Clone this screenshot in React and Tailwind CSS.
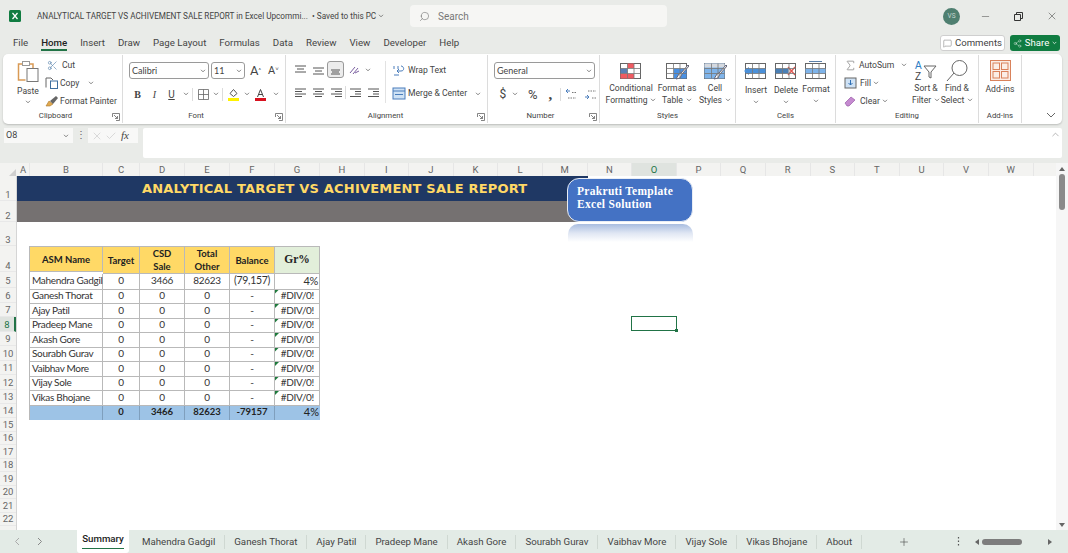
import { Search, Minus, X, Check, Scissors, MessageSquare, Share2, Plus, Sigma, ChevronUp } from 'lucide-react'

const ui = 'font-["Roboto","Liberation_Sans",sans-serif]'
const cellFont = 'font-["Lato","Liberation_Sans",sans-serif]'

const Chev = ({ className = '' }) => (
  <svg width="6" height="4" viewBox="0 0 7 5" className={`shrink-0 ${className}`}>
    <path d="M1 1l2.500 2.500L6 1" fill="none" stroke="#666" strokeWidth="1" />
  </svg>
)

const Launcher = () => (
  <svg width="8" height="8" viewBox="0 0 8 8" className="absolute right-[2px] top-[4px]">
    <path d="M.5 4V.5h7v7H4" fill="none" stroke="#666" strokeWidth=".8" />
    <path d="M2 2l3.500 3.500M5.500 3v2.500H3" fill="none" stroke="#666" strokeWidth=".8" />
  </svg>
)

const Group = ({ width, label, launcher, children }) => (
  <div className={`flex flex-col shrink-0 h-full ${width}`}>
    <div className="h-[54px] border-r border-[#dcdcdc]">{children}</div>
    <div className="relative h-[14px] border-r border-[#dcdcdc] text-center text-[7.800px] leading-[14px] text-[#444]">
      {label}
      {launcher && <Launcher />}
    </div>
  </div>
)

const Lines = ({ rows }) => (
  <svg width="13" height="12" viewBox="0 0 13 12">
    {rows.map(([x1, x2, y], i) => (
      <path key={i} d={`M${x1} ${y}H${x2}`} stroke="#555" strokeWidth="1" />
    ))}
  </svg>
)

const SheetIcon = ({ children }) => (
  <svg width="24" height="20" viewBox="0 0 24 20">
    <rect x="1.500" y="2.500" width="20" height="15" fill="#fff" stroke="#666" />
    {children}
    <path d="M8.500 2.500v15M15 2.500v15M1.500 7.500h20M1.500 12.500h20" stroke="#777" strokeWidth=".8" fill="none" />
  </svg>
)

const Brush = () => (
  <path d="M23 4l-7 8-2 1-3 5 4-1 2-4 7-8z" fill="#fff" stroke="#667" strokeWidth="1" />
)

const BigLabel = ({ a, b, chev = true, width }) => (
  <div className={`flex flex-col items-center text-[8.600px] leading-[11.500px] text-[#444] ${width}`}>
    <span className="whitespace-nowrap">{a}</span>
    <span className="flex items-center gap-[3px] whitespace-nowrap">{b}{chev && <Chev />}</span>
  </div>
)

const SmallRow = ({ icon, label }) => (
  <div className="flex items-center h-[18px] text-[8.600px] text-[#444] whitespace-nowrap">
    <div className="w-[14px] flex justify-center shrink-0">{icon}</div>
    <span className="ml-[1px]">{label}</span>
  </div>
)

const Clipboard = () => (
  <Group width="w-[120px]" label={<span className="pr-[14px]">Clipboard</span>} launcher>
    <div className="flex pl-[11px]">
      <div className="w-[28px] flex flex-col items-center pt-[5px]">
        <svg width="24" height="23" viewBox="0 0 24 23">
          <path d="M7 4H2.500v16h7" fill="none" stroke="#d99a55" strokeWidth="1.500" />
          <path d="M12 4h5v4" fill="none" stroke="#d99a55" strokeWidth="1.500" />
          <rect x="6.500" y="1.500" width="7" height="4" fill="#fff" stroke="#999" />
          <rect x="11" y="8.500" width="11" height="13" fill="#fff" stroke="#777" />
        </svg>
        <span className="mt-[2px] text-[8.600px] leading-[12px] text-[#444]">Paste</span>
        <Chev className="mt-[3px]" />
      </div>
      <div className="ml-[3px] pt-[1px]">
        <SmallRow icon={<Scissors size={11} strokeWidth={1.2} color="#3f6f9f" />} label={<span className="ml-[2px]">Cut</span>} />
        <div className="flex items-center h-[18px] text-[8.600px] text-[#444]">
          <svg width="14" height="12" viewBox="0 0 14 12" className="shrink-0">
            <path d="M1 10.500V1h5l2 2" fill="none" stroke="#666" />
            <rect x="5.500" y="4" width="7" height="7.500" fill="#fff" stroke="#3f6f9f" />
          </svg>
          <span className="ml-[1px]">Copy</span>
          <Chev className="ml-[9px]" />
        </div>
        <SmallRow
          icon={
            <svg width="14" height="12" viewBox="0 0 14 12">
              <path d="M1 11l3-5 4 3-3 2z" fill="#e0a94f" stroke="#a9772d" strokeWidth=".6" />
              <path d="M5 6l6-5 2 2-5 6z" fill="#666" />
            </svg>
          }
          label="Format Painter"
        />
      </div>
    </div>
  </Group>
)

const Box = ({ width, label }) => (
  <div className={`flex items-center justify-between h-[17px] px-[2px] border border-[#9a9a9a] rounded-[3px] bg-white text-[9px] text-[#444] ${width}`}>
    <span className={cellFont}>{label}</span>
    <Chev />
  </div>
)

const Font = () => (
  <Group width="w-[163px]" label={<span className="pr-[16px]">Font</span>} launcher>
    <div className="pl-[6px] pt-[7px]">
      <div className="flex items-center">
        <Box width="w-[80px]" label="Calibri" />
        <Box width="w-[34px] ml-[2px]" label="11" />
        <span className="ml-[5px] w-[18px] text-[13px] leading-none text-[#444]">A<sup className="text-[6px]">^</sup></span>
        <span className="w-[14px] text-[11px] leading-none text-[#444]">A<sup className="text-[6px]">˅</sup></span>
      </div>
      <div className="flex items-center h-[16px] mt-[7px] text-[#444]">
        <span className="w-[17px] text-center text-[10px] font-bold font-['Liberation_Serif',serif]">B</span>
        <span className="w-[17px] text-center text-[10px] italic font-['Liberation_Serif',serif]">I</span>
        <span className="w-[17px] text-center text-[10px] underline">U</span>
        <div className="w-[12px] flex justify-center"><Chev /></div>
        <div className="w-px h-[13px] bg-[#dcdcdc]" />
        <div className="w-[20px] flex justify-center">
          <svg width="11" height="11" viewBox="0 0 11 11"><path d="M.5.5h10v10H.5zM5.500.5v10M.5 5.500h10" fill="none" stroke="#666" strokeWidth=".8" /></svg>
        </div>
        <Chev />
        <div className="w-px h-[13px] bg-[#dcdcdc] ml-[3px]" />
        <div className="w-[21px] flex justify-center">
          <svg width="13" height="13" viewBox="0 0 13 13">
            <path d="M6.500 1.500L10 5.500 6.500 8.500 3 5.500z" fill="#fff" stroke="#555" />
            <rect x="1" y="10" width="11" height="3" fill="#fff200" />
          </svg>
        </div>
        <Chev />
        <div className="w-[21px] flex justify-center">
          <svg width="13" height="13" viewBox="0 0 13 13">
            <path d="M3.500 9L6.500 1.500 9.500 9M4.500 6.500h4" fill="none" stroke="#444" />
            <rect x="1" y="10" width="11" height="3" fill="#d8121f" />
          </svg>
        </div>
        <Chev className="ml-[2px]" />
      </div>
    </div>
  </Group>
)

const alignIcon = rows => <div className="w-[18px] flex justify-center"><Lines rows={rows} /></div>

const Alignment = () => (
  <Group width="w-[202px]" label={<span className="pr-[2px]">Alignment</span>} launcher>
    <div className="flex pl-[5px] pt-[6px]">
      <div className="w-[95px] border-r border-[#e2e2e2] h-[42px]">
        <div className="flex items-center h-[17px]">
          {alignIcon([[1, 12, 2], [3, 10, 5], [1, 12, 8]])}
          {alignIcon([[1, 12, 4], [3, 10, 7], [1, 12, 10]])}
          <div className="w-[17px] h-[17px] flex items-center justify-center bg-[#ececec] border border-[#999] rounded-[3px]">
            <Lines rows={[[2, 11, 6], [3, 10, 8], [2, 11, 10]]} />
          </div>
          <div className="w-[21px] flex justify-center">
            <svg width="13" height="12" viewBox="0 0 13 12"><path d="M2 9l5-6M5 10l5-6M7 9l4-2" fill="none" stroke="#7a5fa0" /></svg>
          </div>
          <Chev />
        </div>
        <div className="flex items-center h-[17px] mt-[6px]">
          {alignIcon([[1, 12, 2], [1, 8, 4.500], [1, 12, 7], [1, 8, 9.500]])}
          {alignIcon([[1, 12, 2], [3, 10, 4.500], [1, 12, 7], [3, 10, 9.500]])}
          {alignIcon([[1, 12, 2], [5, 12, 4.500], [1, 12, 7], [5, 12, 9.500]])}
          <div className="w-px h-[13px] bg-[#dcdcdc]" />
          {alignIcon([[1, 12, 2], [6, 12, 4.500], [6, 12, 7], [1, 12, 9.500]])}
          {alignIcon([[1, 12, 2], [6, 12, 4.500], [6, 12, 7], [1, 12, 9.500]])}
        </div>
      </div>
      <div className="pl-[6px] pt-[1px] text-[8.600px] text-[#444] whitespace-nowrap">
        <div className="flex items-center h-[17px]">
          <svg width="14" height="13" viewBox="0 0 14 13" className="shrink-0">
            <path d="M2 5V2M6 2v3M2 11h5M9 2c3 0 4 5 0 5H5M7 5L5 7l2 2" fill="none" stroke="#4a7dbb" />
          </svg>
          <span className="ml-[2px]">Wrap Text</span>
        </div>
        <div className="flex items-center h-[17px] mt-[6px]">
          <svg width="14" height="13" viewBox="0 0 14 13" className="shrink-0">
            <rect x="1" y="1" width="12" height="11" fill="#cfe2f5" stroke="#4a7dbb" />
            <path d="M1 4h12M3 7.500h8" stroke="#4a7dbb" />
          </svg>
          <span className="ml-[2px]">Merge &amp; Center</span>
          <Chev className="ml-[8px]" />
        </div>
      </div>
    </div>
  </Group>
)

const NumberGroup = () => (
  <Group width="w-[112px]" label={<span className="pr-[6px]">Number</span>} launcher>
    <div className="pl-[6px] pt-[7px]">
      <Box width="w-[101px]" label="General" />
      <div className="flex items-center h-[16px] mt-[7px] text-[#444]">
        <span className="w-[18px] text-center text-[12px]">$</span>
        <Chev />
        <span className="ml-[3px] w-[24px] text-center text-[13px] leading-none">%</span>
        <span className="w-[12px] text-center text-[15px] font-bold leading-none font-['Liberation_Serif',serif]">,</span>
        <div className="w-px h-[13px] bg-[#dcdcdc] ml-[4px]" />
        <div className="w-[20px] flex justify-center">
          <svg width="13" height="12" viewBox="0 0 13 12"><path d="M5 3H1l2-2M1 3l2 2" fill="none" stroke="#4a7dbb" /><path d="M7 4.500h5M3 10h8" stroke="#777" strokeDasharray="1.500 1" /></svg>
        </div>
        <div className="w-[18px] flex justify-center">
          <svg width="13" height="12" viewBox="0 0 13 12"><path d="M4 3h8M8 10h4" stroke="#777" strokeDasharray="1.500 1" /><path d="M1 9h4l-2-2M5 9l-2 2" fill="none" stroke="#4a7dbb" /></svg>
        </div>
      </div>
    </div>
  </Group>
)

const Big = ({ icon, width, children }) => (
  <div className={`flex flex-col items-center ${width}`}>
    <div className="h-[25px] flex items-center">{icon}</div>
    {children}
  </div>
)

const Styles = () => (
  <Group width="w-[136px]" label={<span>Styles</span>}>
    <div className="flex pl-[5px] pt-[3px]">
      <Big width="w-[52px]" icon={
        <SheetIcon>
          <rect x="8.500" y="2.500" width="6.500" height="5" fill="#ef5b62" />
          <rect x="1.500" y="12.500" width="13.500" height="5" fill="#ef5b62" />
          <rect x="8.500" y="7.500" width="6.500" height="5" fill="#fff" />
          <rect x="1.500" y="7.500" width="7" height="5" fill="#5a7fb5" />
        </SheetIcon>
      }>
        <BigLabel a="Conditional" b="Formatting" />
      </Big>
      <Big width="w-[38px] ml-[1px]" icon={
        <SheetIcon>
          <rect x="9" y="7.500" width="12.500" height="10" fill="#4a90e2" />
          <Brush />
        </SheetIcon>
      }>
        <BigLabel a="Format as" b="Table" />
      </Big>
      <Big width="w-[36px] ml-[1px]" icon={
        <SheetIcon>
          <rect x="1.500" y="2.500" width="20" height="15" fill="#7fb4ea" />
          <rect x="1.500" y="2.500" width="20" height="4" fill="#d5d9df" />
          <Brush />
        </SheetIcon>
      }>
        <BigLabel a="Cell" b="Styles" />
      </Big>
    </div>
  </Group>
)

const Cells = () => (
  <Group width="w-[100px]" label={<span>Cells</span>}>
    <div className="flex pl-[5px] pt-[3px]">
      <Big width="w-[30px]" icon={
        <SheetIcon>
          <rect x="1.500" y="7.500" width="20" height="5" fill="#4a90d9" />
          <path d="M0 10l5-4v8z" fill="#4a90d9" />
        </SheetIcon>
      }>
        <div className="flex flex-col items-center text-[8.600px] leading-[12px] text-[#444] pt-[1px]">Insert<Chev className="mt-[4px]" /></div>
      </Big>
      <Big width="w-[30px]" icon={
        <SheetIcon>
          <rect x="1.500" y="7.500" width="13" height="5" fill="#4a7fb5" />
          <path d="M14 6l7 8M21 6l-7 8" stroke="#e0564f" strokeWidth="1.300" />
        </SheetIcon>
      }>
        <div className="flex flex-col items-center text-[8.600px] leading-[12px] text-[#444] pt-[1px]">Delete<Chev className="mt-[4px]" /></div>
      </Big>
      <Big width="w-[30px]" icon={
        <SheetIcon>
          <path d="M5 .5h13" stroke="#5b7fa8" />
          <rect x="1.500" y="7.500" width="20" height="5" fill="#7fb4ea" />
        </SheetIcon>
      }>
        <div className="flex flex-col items-center text-[8.600px] leading-[12px] text-[#444]">Format<Chev className="mt-[4px]" /></div>
      </Big>
    </div>
  </Group>
)

const Editing = () => (
  <Group width="w-[143px]" label={<span>Editing</span>}>
    <div className="flex pl-[8px] pt-[1px]">
      <div className="w-[66px]">
        <div className="flex items-center h-[18px] text-[8.600px] text-[#444]">
          <Sigma size={13} strokeWidth={1} color="#555" className="shrink-0" />
          <span className="ml-[2px]">AutoSum</span>
          <Chev className="ml-[7px]" />
        </div>
        <div className="flex items-center h-[18px] text-[8.600px] text-[#444]">
          <svg width="13" height="12" viewBox="0 0 13 12" className="shrink-0">
            <rect x="1" y="1" width="11" height="10" fill="#cfe2f5" stroke="#666" />
            <path d="M6.500 3v5M4.500 6l2 2 2-2" fill="none" stroke="#2f6fb5" />
          </svg>
          <span className="ml-[3px]">Fill</span>
          <Chev className="ml-[2px]" />
        </div>
        <div className="flex items-center h-[18px] text-[8.600px] text-[#444]">
          <svg width="13" height="12" viewBox="0 0 13 12" className="shrink-0">
            <path d="M1 8l6-6 4 3-6 6H3z" fill="#c58ad0" stroke="#9a5ca8" strokeWidth=".7" />
          </svg>
          <span className="ml-[3px]">Clear</span>
          <Chev className="ml-[2px]" />
        </div>
      </div>
      <Big width="w-[32px] mt-[2px]" icon={
        <svg width="24" height="24" viewBox="0 0 24 24">
          <text x="1" y="10" fontSize="10" fill="#2f7fc5" fontFamily="Liberation Sans">A</text>
          <text x="1" y="21" fontSize="10" fill="#444" fontFamily="Liberation Sans">Z</text>
          <path d="M10 7h12l-5 6v6l-2-1v-5z" fill="#fff" stroke="#666" />
        </svg>
      }>
        <BigLabel a="Sort &" b="Filter" />
      </Big>
      <Big width="w-[30px] mt-[2px]" icon={
        <svg width="24" height="24" viewBox="0 0 24 24">
          <circle cx="14.500" cy="9" r="7.500" fill="none" stroke="#666" />
          <path d="M9 14L2 22" stroke="#666" />
        </svg>
      }>
        <BigLabel a="Find &" b="Select" />
      </Big>
    </div>
  </Group>
)

const AddIns = () => (
  <Group width="w-[43px]" label={<span>Add-ins</span>}>
    <div className="flex justify-center pt-[3px]">
      <Big width="w-[40px]" icon={
        <svg width="21" height="21" viewBox="0 0 21 21" fill="#fbeee6" stroke="#d9825b">
          <rect x=".5" y=".5" width="20" height="20" />
          <rect x="3" y="3" width="6.500" height="6.500" />
          <rect x="11.500" y="3" width="6.500" height="6.500" />
          <rect x="3" y="11.500" width="6.500" height="6.500" />
          <rect x="11.500" y="11.500" width="6.500" height="6.500" />
        </svg>
      }>
        <span className="mt-[1px] text-[8.600px] leading-[11.500px] text-[#444]">Add-ins</span>
      </Big>
    </div>
  </Group>
)

const letters = 'ABCDEFGHIJKLMNOPQRSTUVW'.split('')

const ColumnHeaders = () => (
  <div className="grid grid-cols-[17px_13px_73px_37px_45px_45px_45px_45px_repeat(16,44.6px)] h-[13px] bg-[#f3f3f1] text-[9.500px] leading-[13px] text-[#666] overflow-hidden">
    <div className="flex items-end justify-end pr-[1px] pb-[1px]">
      <div className="w-0 h-0 border-l-[8px] border-l-transparent border-b-[8px] border-b-[#cfcfcf]" />
    </div>
    {letters.map(l => (
      <div
        key={l}
        className={`text-center border-r border-[#e6e6e6] ${l === 'O' ? 'bg-[#dfe3df] border-b-2 border-b-[#217346] text-[#217346]' : ''}`}
      >
        {l}
      </div>
    ))}
  </div>
)

const rowNumbers = Array.from({ length: 22 }, (_, i) => i + 1)

const RowHeaders = () => (
  <div className="grid content-start grid-rows-[25px_21px_24px_26px_16px_repeat(8,14.500px)_14px_repeat(8,13.500px)] w-[17px] shrink-0 bg-[#f3f3f1] border-r border-[#d5d5d5] text-[9.500px] text-[#666]">
    {rowNumbers.map(n => (
      <div
        key={n}
        className={`flex items-end justify-center border-b border-[#e8e8e8] ${n < 5 ? 'leading-[11px]' : 'leading-[13px]'} ${n === 8 ? 'bg-[#dfe3df] border-r-2 border-r-[#217346] text-[#217346]' : ''}`}
      >
        {n}
      </div>
    ))}
  </div>
)

const names = ['Ganesh Thorat', 'Ajay Patil', 'Pradeep Mane', 'Akash Gore', 'Sourabh Gurav', 'Vaibhav More', 'Vijay Sole', 'Vikas Bhojane']
const cellBorder = 'border-r border-b border-[#b9b9b9]'
const headCell = `flex items-center justify-center text-center bg-[#ffd966] font-bold text-[9.500px] leading-[13px] text-[#222] ${cellBorder}`
const numCell = `flex items-center justify-center h-[14.500px] pb-[1px] text-[10px] tracking-[-0.3px] text-[#333] ${cellBorder}`
const totalCell = `flex items-center justify-center h-[14.500px] pb-[1px] bg-[#9dc3e6] font-bold text-[9.500px] text-[#222] border-r border-[#7f9fbd]`

const DataTable = () => (
  <div className={`ml-[12px] grid w-[291px] grid-cols-[73px_37px_45px_45px_45px_45px] border-l border-t border-[#b9b9b9] ${cellFont}`}>
    <div className={`${headCell} h-[25px]`}>ASM Name</div>
    <div className={headCell}>Target</div>
    <div className={headCell}>CSD<br />Sale</div>
    <div className={headCell}>Total<br />Other</div>
    <div className={headCell}>Balance</div>
    <div className={`flex items-center justify-center bg-[#e2efda] font-bold text-[11.500px] text-[#222] font-['Liberation_Serif',serif] ${cellBorder}`}>Gr%</div>

    <div className={`${numCell} !justify-start !h-[15.500px] pl-[2px] whitespace-nowrap`}>Mahendra Gadgil</div>
    <div className={`${numCell} !h-[15.500px]`}>0</div>
    <div className={`${numCell} !h-[15.500px]`}>3466</div>
    <div className={`${numCell} !h-[15.500px]`}>82623</div>
    <div className={`${numCell} !h-[15.500px] !text-[10.500px]`}>(79,157)</div>
    <div className={`${numCell} !h-[15.500px] !justify-end pr-[1px] !text-[11px]`}>4%</div>

    {names.map(name => (
      <div key={name} className="contents">
        <div className={`${numCell} !justify-start pl-[2px]`}>{name}</div>
        <div className={numCell}>0</div>
        <div className={numCell}>0</div>
        <div className={numCell}>0</div>
        <div className={numCell}>-</div>
        <div className={`${numCell} relative !justify-end pr-[5px]`}>
          <span className="absolute left-0 top-0 w-[4px] h-[4px] bg-[#1e7a3c] [clip-path:polygon(0_0,100%_0,0_100%)]" />
          #DIV/0!
        </div>
      </div>
    ))}

    <div className={totalCell} />
    <div className={totalCell}>0</div>
    <div className={totalCell}>3466</div>
    <div className={totalCell}>82623</div>
    <div className={totalCell}>-79157</div>
    <div className={`${totalCell} !justify-end pr-[1px] !font-normal !text-[11px] border-r-0`}>4%</div>
  </div>
)

const Sheet = () => (
  <div className="relative flex-1 overflow-hidden bg-white">
    <div className="flex items-center h-[25px] w-[571px] pl-[125px] bg-[#1f3864] text-[#ffd966] text-[13px] font-bold tracking-[0.2px] whitespace-nowrap font-['DejaVu_Sans',sans-serif]">
      ANALYTICAL TARGET VS ACHIVEMENT SALE REPORT
    </div>
    <div className="h-[21px] w-[571px] bg-[#757171]" />
    <div className="h-[24px]" />
    <DataTable />

    {/* text box over the sheet */}
    <div className="absolute left-[550px] top-[2px] w-[126px] h-[44px] rounded-[12px] bg-[#4472c4] border-[1.500px] border-[#e8edf5] pl-[9px] pt-[6px] text-white font-bold text-[11.500px] leading-[13px] font-['Liberation_Serif',serif] tracking-[0.3px]">
      Prakruti Template<br />Excel Solution
    </div>
    <div className="absolute left-[551px] top-[48px] w-[125px] h-[18px] rounded-t-[10px] bg-gradient-to-b from-[#a9bde0] via-[#dfe6f3] to-white" />

    {/* active cell O8 */}
    <div className="absolute left-[614px] top-[140px] w-[46px] h-[15px] border-[1.500px] border-[#217346]">
      <span className="absolute -right-[2px] -bottom-[2px] w-[3px] h-[3px] bg-[#217346]" />
    </div>
  </div>
)

const tabs = ['Mahendra Gadgil', 'Ganesh Thorat', 'Ajay Patil', 'Pradeep Mane', 'Akash Gore', 'Sourabh Gurav', 'Vaibhav More', 'Vijay Sole', 'Vikas Bhojane', 'About']

const TabBar = () => (
  <div className={`flex items-stretch h-[23px] shrink-0 bg-[#e3ebe6] text-[9.700px] text-[#444] ${ui}`}>
    <div className="flex items-center shrink-0 w-[77px] pl-[14px] gap-[17px]">
      <svg width="6" height="9" viewBox="0 0 6 9"><path d="M5 1L1.500 4.500 5 8" fill="none" stroke="#aaa" /></svg>
      <svg width="6" height="9" viewBox="0 0 6 9"><path d="M1 1l3.500 3.500L1 8" fill="none" stroke="#888" /></svg>
    </div>
    <div className="w-[52px] bg-white rounded-b-[3px] flex justify-center shrink-0">
      <span className="h-[19px] leading-[18px] font-medium text-[#222] border-b border-[#217346]">Summary</span>
    </div>
    <div className="flex items-center ml-[4px] shrink-0">
      {tabs.map(t => (
        <div key={t} className="h-[14px] px-[9px] leading-[14px] border-r border-[#cfd8d2] whitespace-nowrap">{t}</div>
      ))}
    </div>
    <div className="ml-[36px] flex items-center shrink-0">
      <Plus size={12} strokeWidth={1.2} color="#444" />
    </div>
    <div className="ml-auto pr-[16px] flex items-center shrink-0">
      <svg width="3" height="9" viewBox="0 0 3 9"><path d="M1.500 0v1.500M1.500 3.500v1.500M1.500 7v1.500" stroke="#555" strokeWidth="1.200" /></svg>
      <div className="ml-[15px] w-0 h-0 border-y-[3px] border-y-transparent border-r-[4px] border-r-[#666]" />
      <div className="ml-[3px] w-[40px] h-[6px] rounded-full bg-[#7d7d7d]" />
      <div className="ml-[26px] w-0 h-0 border-y-[3px] border-y-transparent border-l-[4px] border-l-[#666]" />
    </div>
  </div>
)

export default function App() {
  return (
    <div className={`flex flex-col w-[1068px] h-[553px] overflow-hidden bg-[#e9ebe8] ${ui}`}>
      {/* title bar */}
      <div className="flex items-center h-[32px] shrink-0 text-[8.200px] text-[#444]">
        <svg width="12" height="12" viewBox="0 0 12 12" className="ml-[9px] shrink-0">
          <rect width="12" height="12" rx="1.500" fill="#107c41" />
          <path d="M3.500 3l5 6M8.500 3l-5 6" stroke="#fff" strokeWidth="1.200" />
        </svg>
        <span className="ml-[16px] w-[269px] shrink-0 whitespace-nowrap">ANALYTICAL TARGET VS ACHIVEMENT SALE REPORT in Excel Upcommi...</span>
        <span className="ml-[6px] w-[80px] shrink-0 flex items-center whitespace-nowrap">• Saved to this PC<Chev className="ml-[2px]" /></span>
        <div className="flex items-center ml-[18px] w-[257px] h-[22px] shrink-0 pl-[9px] gap-[8px] bg-[#f6f6f4] rounded-[4px] text-[10px] text-[#777]">
          <Search size={11} strokeWidth={1.200} color="#666" className="-scale-x-100" />
          Search
        </div>
        <div className="ml-[276px] w-[17px] h-[17px] rounded-full bg-[#4f7f70] text-[#c5d6d0] text-[6.500px] leading-[17px] text-center shrink-0">VS</div>
        <Minus size={11} strokeWidth={1} color="#333" className="ml-[20px]" />
        <svg width="9" height="9" viewBox="0 0 9 9" className="ml-[23px]"><path d="M2.500 2V.5h6v6H7M.5 2.500h6v6h-6z" fill="none" stroke="#333" /></svg>
        <X size={12} strokeWidth={1} color="#333" className="ml-[23px]" />
      </div>

      {/* menu tabs */}
      <div className="flex items-center h-[22px] shrink-0 pl-[13px] gap-[13px] text-[9.700px] text-[#444] whitespace-nowrap">
        <span>File</span>
        <span className="relative font-medium text-[#222]">
          Home
          <span className="absolute left-0 right-0 -bottom-[1px] h-[2px] bg-[#217346]" />
        </span>
        <span>Insert</span>
        <span>Draw</span>
        <span>Page Layout</span>
        <span>Formulas</span>
        <span>Data</span>
        <span>Review</span>
        <span>View</span>
        <span>Developer</span>
        <span>Help</span>
        <div className="ml-auto flex items-center h-[16px] w-[65px] justify-center gap-[3px] bg-white border border-[#cfcfcf] rounded-[3px] text-[9.600px]">
          <MessageSquare size={9} strokeWidth={1} color="#444" />
          Comments
        </div>
        <div className="-ml-[8px] mr-[8px] flex items-center h-[16px] w-[50px] justify-center gap-[3px] bg-[#107c41] rounded-[3px] text-[9.600px] text-white">
          <Share2 size={9} strokeWidth={1} color="#fff" />
          Share
          <svg width="5" height="4" viewBox="0 0 7 5"><path d="M1 1l2.500 2.500L6 1" fill="none" stroke="#fff" /></svg>
        </div>
      </div>

      {/* ribbon */}
      <div className="flex ml-[3px] mr-[6px] h-[70px] shrink-0 py-[1px] bg-white rounded-[5px] shadow-[0_1px_2px_rgba(0,0,0,0.2)]">
        <Clipboard />
        <Font />
        <Alignment />
        <NumberGroup />
        <Styles />
        <Cells />
        <Editing />
        <AddIns />
        <div className="flex-1 flex items-end justify-end pr-[6px] pb-[5px]">
          <svg width="10" height="6" viewBox="0 0 10 6"><path d="M1 1l4 4 4-4" fill="none" stroke="#666" /></svg>
        </div>
      </div>

      {/* formula bar */}
      <div className="flex h-[30px] mt-[4px] shrink-0 pl-[4px] pr-[6px]">
        <div className="flex items-center justify-between w-[69px] h-[15px] px-[2px] bg-[#f8f8f7] text-[9px] text-[#444]">
          O8 <Chev className="mr-[2px]" />
        </div>
        <span className="w-[15px] text-center text-[10px] leading-[14px] text-[#666]">⋮</span>
        <div className="flex items-center w-[50px] h-[15px] pl-[3px] gap-[2px] bg-[#f8f8f7]">
          <X size={12} strokeWidth={1} color="#bbb" />
          <Check size={12} strokeWidth={1} color="#bbb" />
          <span className="ml-[2px] text-[11px] italic font-['Liberation_Serif',serif] text-[#444]">fx</span>
        </div>
        <div className="flex justify-end flex-1 ml-[5px] pr-[1px] pt-[1px] bg-white rounded-[2px]">
          <ChevronUp size={11} strokeWidth={1} color="#666" />
        </div>
      </div>

      {/* worksheet */}
      <div className="flex-1 flex flex-col mt-[5px] min-h-0 bg-white">
        <div className="flex flex-1 min-h-0">
          <div className="flex flex-col flex-1 min-w-0">
            <ColumnHeaders />
            <div className="flex flex-1 min-h-0 overflow-hidden">
              <RowHeaders />
              <Sheet />
            </div>
          </div>
          {/* vertical scrollbar */}
          <div className="flex flex-col items-center w-[12px] shrink-0 pt-[4px] bg-[#f6f6f6]">
            <div className="w-0 h-0 border-x-[3px] border-x-transparent border-b-[4px] border-b-[#666]" />
            <div className="mt-[3px] w-[6px] h-[36px] rounded-full bg-[#8a8a8a]" />
            <div className="mt-auto mb-[3px] w-0 h-0 border-x-[3px] border-x-transparent border-t-[4px] border-t-[#666]" />
          </div>
        </div>
        <TabBar />
      </div>
    </div>
  )
}
